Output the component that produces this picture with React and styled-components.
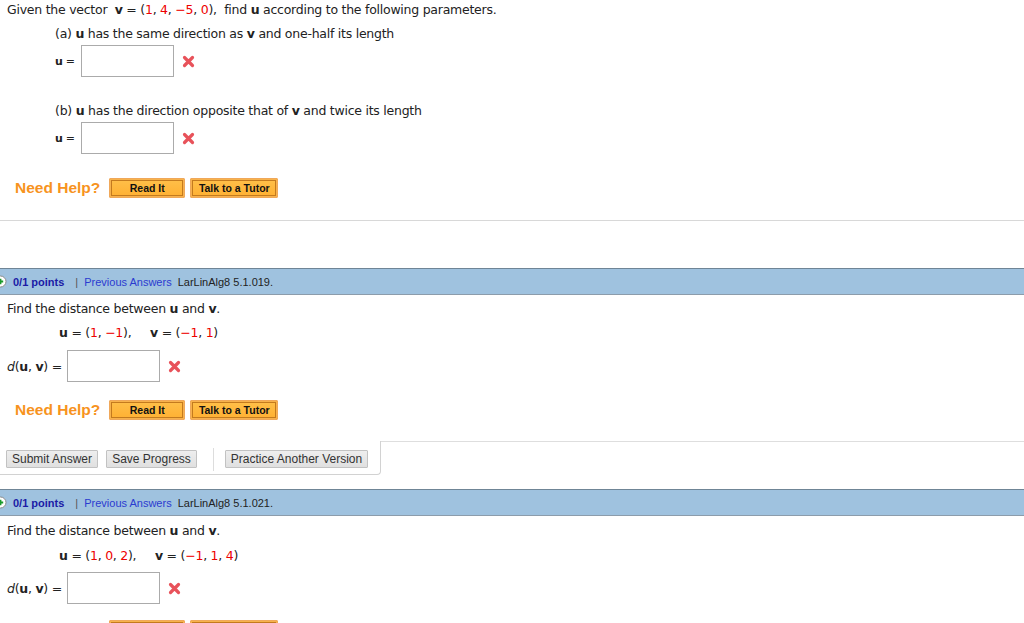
import React from "react";
import styled, { createGlobalStyle } from "styled-components";

const GlobalStyle = createGlobalStyle`
  html, body { margin: 0; padding: 0; background: #fff; }
  body {
    font-family: "DejaVu Sans", Verdana, sans-serif;
    font-size: 13px;
    color: #222;
  }
  * { box-sizing: border-box; }
`;

const Page = styled.div`
  width: 1024px;
  height: 623px;
  overflow: hidden;
`;

const QBody = styled.div`
  padding-left: 7px;
`;

const Line = styled.div`
  margin: ${(p) => p.$mt || 0}px 0 0 ${(p) => p.$indent || 0}px;
  height: 16px;
  line-height: 16px;
  white-space: nowrap;
  font-size: 12.5px;
  letter-spacing: -0.25px;
`;

const B = styled.b`
  font-weight: bold;
`;

const Num = styled.span`
  color: #ee0000;
`;

const Ital = styled.i`
  font-style: italic;
`;

const AnswerRow = styled.div`
  display: flex;
  align-items: center;
  height: 32px;
  margin: ${(p) => p.$mt || 0}px 0 0 ${(p) => p.$indent || 0}px;
  white-space: nowrap;
`;

const AnswerLabel = styled.span`
  font-size: ${(p) => p.$size || 13}px;
  letter-spacing: -0.25px;
  margin-right: ${(p) => p.$gap || 5}px;
`;

const AnswerInput = styled.div`
  width: 93px;
  height: 32px;
  border: 1px solid #ababab;
  background: #fff;
`;

const XWrap = styled.svg`
  margin-left: 8px;
  margin-top: 1px;
  flex: none;
`;

const XMark = () => (
  <XWrap width="13" height="13" viewBox="0 0 13 13">
    <path
      d="M2.5 2.5 L10.5 10.5 M10.5 2.5 L2.5 10.5"
      stroke="#e8525a"
      strokeWidth="3.2"
      strokeLinecap="round"
      fill="none"
    />
  </XWrap>
);

const HelpRow = styled.div`
  display: flex;
  align-items: center;
  height: 20px;
  margin: ${(p) => p.$mt || 0}px 0 0 8px;
`;

const HelpLabel = styled.span`
  font-family: "Liberation Sans", Arial, sans-serif;
  font-weight: bold;
  font-size: 15.5px;
  color: #f7931e;
  margin-right: 9px;
  white-space: nowrap;
`;

const HelpButton = styled.button`
  width: ${(p) => p.$w}px;
  height: 20px;
  margin-right: 5px;
  padding: 0;
  font-family: "Liberation Sans", Arial, sans-serif;
  font-weight: bold;
  font-size: 10.5px;
  color: #111;
  background: linear-gradient(#ffc04a, #ffb032);
  border: 1px solid #f0a85a;
  box-shadow: inset 0 0 0 1px #f7b24c, inset 0 0 0 2px #c47a1e;
  border-radius: 1px;
  white-space: nowrap;
  cursor: pointer;
`;

const Rule = styled.div`
  height: 1px;
  background: #d8d8d8;
  margin-top: ${(p) => p.$mt || 0}px;
`;

const Header = styled.div`
  display: flex;
  align-items: center;
  height: 27px;
  margin-top: ${(p) => p.$mt || 0}px;
  background: #9fc2df;
  border-top: 1px solid #6f8596;
  border-bottom: 1px solid #8c9cab;
  font-family: "Liberation Sans", Arial, sans-serif;
  font-size: 11px;
  white-space: nowrap;
`;

const HeaderIcon = styled.svg`
  margin-left: -6px;
  margin-right: 6px;
  flex: none;
`;

const Points = styled.span`
  font-weight: bold;
  color: #1b1ba6;
`;

const Pipe = styled.span`
  color: #555;
  margin: 0 6px 0 11px;
`;

const PrevLink = styled.span`
  color: #2b3bd0;
  margin-right: 6px;
`;

const Ref = styled.span`
  color: #222;
`;

const QHeader = ({ mt, code }) => (
  <Header $mt={mt}>
    <HeaderIcon width="13" height="13" viewBox="0 0 13 13">
      <circle cx="6.5" cy="6.5" r="5.5" fill="#fff" stroke="#8a8a8a" strokeWidth="1" />
      <path d="M6.5 3.8 V9.2 M3.8 6.5 H9.2" stroke="#1a9a2a" strokeWidth="1.8" />
    </HeaderIcon>
    <Points>0/1 points</Points>
    <Pipe>|</Pipe>
    <PrevLink>Previous Answers</PrevLink>
    <Ref>{code}</Ref>
  </Header>
);

const SubmitBar = styled.div`
  display: flex;
  margin-top: ${(p) => p.$mt || 0}px;
`;

const SubmitBox = styled.div`
  display: flex;
  align-items: flex-start;
  width: 381px;
  height: 34px;
  padding: 9px 0 0 6px;
  border-right: 1px solid #d2d2d2;
  border-bottom: 1px solid #d2d2d2;
  border-bottom-right-radius: 4px;
`;

const SubmitFill = styled.div`
  flex: 1;
  border-top: 1px solid #dedede;
`;

const GrayButton = styled.button`
  width: ${(p) => p.$w}px;
  height: 18px;
  margin-right: 8px;
  padding: 0;
  font-family: "Liberation Sans", Arial, sans-serif;
  font-size: 12px;
  color: #333;
  background: linear-gradient(#eeeeee, #e0e0e0);
  border: 1px solid #c2c2c2;
  border-radius: 1px;
  white-space: nowrap;
  cursor: pointer;
`;

const VSep = styled.div`
  width: 1px;
  height: 23px;
  margin: -2px 11px 0 8px;
  background: #dddddd;
`;

const Help = ({ mt }) => (
  <HelpRow $mt={mt}>
    <HelpLabel>Need Help?</HelpLabel>
    <HelpButton $w={76}>Read It</HelpButton>
    <HelpButton $w={88}>Talk to a Tutor</HelpButton>
  </HelpRow>
);

const DRow = ({ mt }) => (
  <AnswerRow $mt={mt}>
    <AnswerLabel $size={12.5}>
      <Ital>d</Ital>(<B>u</B>, <B>v</B>) =
    </AnswerLabel>
    <AnswerInput />
    <XMark />
  </AnswerRow>
);

export default function App() {
  return (
    <Page>
      <GlobalStyle />
      <QBody>
        <Line $mt={2}>
          Given the vector&nbsp; <B>v</B> = (<Num>1</Num>, <Num>4</Num>, <Num>−5</Num>,{" "}
          <Num>0</Num>),&nbsp; find <B>u</B> according to the following parameters.
        </Line>
        <Line $mt={8} $indent={48}>
          (a) <B>u</B> has the same direction as <B>v</B> and one-half its length
        </Line>
        <AnswerRow $mt={3} $indent={48}>
          <AnswerLabel $size={11} $gap={6}>
            <B>u</B> =
          </AnswerLabel>
          <AnswerInput />
          <XMark />
        </AnswerRow>
        <Line $mt={26} $indent={48}>
          (b) <B>u</B> has the direction opposite that of <B>v</B> and twice its length
        </Line>
        <AnswerRow $mt={3} $indent={48}>
          <AnswerLabel $size={11} $gap={6}>
            <B>u</B> =
          </AnswerLabel>
          <AnswerInput />
          <XMark />
        </AnswerRow>
        <Help mt={24} />
      </QBody>
      <Rule $mt={22} />

      <QHeader mt={47} code="LarLinAlg8 5.1.019." />
      <QBody>
        <Line $mt={6}>
          Find the distance between <B>u</B> and <B>v</B>.
        </Line>
        <Line $mt={8} $indent={52}>
          <B>u</B> = (<Num>1</Num>, <Num>−1</Num>),&nbsp;&nbsp;&nbsp;&nbsp; <B>v</B> = (
          <Num>−1</Num>, <Num>1</Num>)
        </Line>
        <DRow mt={9} />
        <Help mt={18} />
      </QBody>
      <SubmitBar $mt={21}>
        <SubmitBox>
          <GrayButton $w={92}>Submit Answer</GrayButton>
          <GrayButton $w={91}>Save Progress</GrayButton>
          <VSep />
          <GrayButton $w={143}>Practice Another Version</GrayButton>
        </SubmitBox>
        <SubmitFill />
      </SubmitBar>

      <QHeader mt={14} code="LarLinAlg8 5.1.021." />
      <QBody>
        <Line $mt={7}>
          Find the distance between <B>u</B> and <B>v</B>.
        </Line>
        <Line $mt={9} $indent={52}>
          <B>u</B> = (<Num>1</Num>, <Num>0</Num>, <Num>2</Num>),&nbsp;&nbsp;&nbsp;&nbsp;{" "}
          <B>v</B> = (<Num>−1</Num>, <Num>1</Num>, <Num>4</Num>)
        </Line>
        <DRow mt={8} />
        <Help mt={16} />
      </QBody>
    </Page>
  );
}
